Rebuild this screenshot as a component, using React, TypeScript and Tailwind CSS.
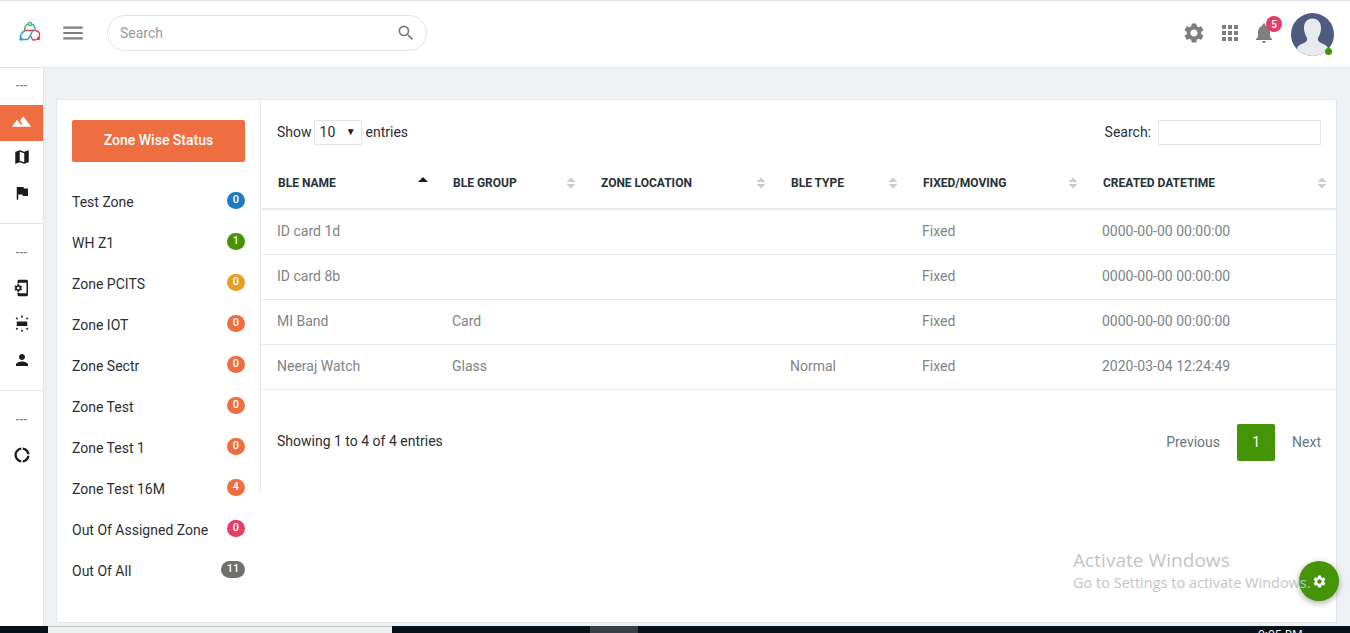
import {
  MdApps,
  MdDonutLarge,
  MdFlag,
  MdMap,
  MdMenu,
  MdNotifications,
  MdPerson,
  MdPhonelinkSetup,
  MdSearch,
  MdSettings,
  MdTerrain,
  MdWbIridescent,
} from 'react-icons/md';

const zones = [
  { name: 'Test Zone', count: 0, color: 'bg-[#1a7cc1]' },
  { name: 'WH Z1', count: 1, color: 'bg-[#459407]' },
  { name: 'Zone PCITS', count: 0, color: 'bg-[#e79f26]' },
  { name: 'Zone IOT', count: 0, color: 'bg-[#ef6e41]' },
  { name: 'Zone Sectr', count: 0, color: 'bg-[#ef6e41]' },
  { name: 'Zone Test', count: 0, color: 'bg-[#ef6e41]' },
  { name: 'Zone Test 1', count: 0, color: 'bg-[#ef6e41]' },
  { name: 'Zone Test 16M', count: 4, color: 'bg-[#ef6e41]' },
  { name: 'Out Of Assigned Zone', count: 0, color: 'bg-[#e23e67]' },
  { name: 'Out Of All', count: 11, color: 'bg-[#6f6f6f]' },
];

const columns = [
  { label: 'BLE NAME', width: 'w-[175px]', sorted: true },
  { label: 'BLE GROUP', width: 'w-[148px]' },
  { label: 'ZONE LOCATION', width: 'w-[190px]' },
  { label: 'BLE TYPE', width: 'w-[132px]' },
  { label: 'FIXED/MOVING', width: 'w-[180px]' },
  { label: 'CREATED DATETIME', width: 'w-[249px]' },
];

const rows = [
  ['ID card 1d', '', '', '', 'Fixed', '0000-00-00 00:00:00'],
  ['ID card 8b', '', '', '', 'Fixed', '0000-00-00 00:00:00'],
  ['MI Band', 'Card', '', '', 'Fixed', '0000-00-00 00:00:00'],
  ['Neeraj Watch', 'Glass', '', 'Normal', 'Fixed', '2020-03-04 12:24:49'],
];

function Logo() {
  return (
    <svg width="24" height="24" viewBox="0 0 24 24" fill="none" strokeWidth="1.4" strokeLinecap="round">
      <path d="M6.500 9.500C6.500 6 8 3.500 10.500 3" stroke="#47b36a" />
      <path d="M13.500 3C15.500 3.500 16.800 5.500 17 8" stroke="#47b36a" />
      <circle cx="12" cy="3" r="1.600" stroke="#47b36a" />
      <path d="M7 9.500H18C21.500 10 22.500 13.500 21 16.500" stroke="#e2404f" />
      <path d="M12.500 15L14.500 18.500C16.500 19.500 18 19 19.500 18" stroke="#e2404f" />
      <circle cx="20.500" cy="17.500" r="1.700" fill="#e2404f" stroke="none" />
      <path d="M6.500 10C3.500 11.500 2 14.500 2.500 16.500" stroke="#2a9ddb" />
      <path d="M4.500 18.500H9C11 18.500 12 15 15 9" stroke="#2a9ddb" />
      <circle cx="3" cy="18" r="1.700" fill="#2a9ddb" stroke="none" />
    </svg>
  );
}

function Avatar() {
  return (
    <svg width="43" height="43" viewBox="0 0 43 43">
      <defs>
        <clipPath id="avatar-clip">
          <circle cx="21.500" cy="21.500" r="21.500" />
        </clipPath>
      </defs>
      <g clipPath="url(#avatar-clip)">
        <rect width="43" height="43" fill="#4f5b7f" />
        <path
          d="M21.500 5.500c-5.500 0-8.500 4-8.500 9.500 0 4 1.500 7.500 3 10 .6 2-.5 4-3 5-3 1.200-7 2.500-7 6.500V43h31v-6.500c0-4-4-5.300-7-6.500-2.500-1-3.600-3-3-5 1.500-2.500 3-6 3-10 0-5.500-3-9.500-8.500-9.500z"
          fill="#e6eaec"
        />
      </g>
    </svg>
  );
}

function SortArrows({ sorted }: { sorted?: boolean }) {
  if (sorted) {
    return (
      <svg width="10" height="12" viewBox="0 0 10 12" className="text-[#1b1b1b] -mt-[3px]">
        <path d="M0 6 5 1l5 5z" fill="currentColor" />
      </svg>
    );
  }
  return (
    <svg width="10" height="12" viewBox="0 0 10 12" className="text-[#c9cdd0]">
      <path d="M0.500 5 5 0.500 9.500 5zM0.500 7h9L5 11.500z" fill="currentColor" />
    </svg>
  );
}

function SideGroup({ className, children }: { className: string; children: React.ReactNode }) {
  return (
    <div className={className}>
      <div className="h-[12px] mt-[1px] -mb-[1px] flex items-center justify-center text-[#777] text-[10px] font-bold leading-none">---</div>
      {children}
    </div>
  );
}

function SideItem({ icon, active }: { icon: React.ReactNode; active?: boolean }) {
  return (
    <div className={`h-[36px] flex items-center justify-center text-[18px] ${active ? 'bg-[#ef6e41] text-white' : 'text-[#1c1c1c]'}`}>
      {icon}
    </div>
  );
}

export default function App() {
  return (
    <div className="relative w-[1350px] h-[633px] overflow-hidden flex flex-col bg-white text-[14px] font-['Roboto',sans-serif]">
      <header className="h-[68px] shrink-0 flex items-center pb-[2px] bg-white border-t border-t-[#dfe2e4] border-b border-b-[#e3e6e8]">
        <div className="w-[60px] flex justify-center">
          <Logo />
        </div>
        <MdMenu className="text-[#7f7f7f] text-[26px]" />
        <div className="ml-[21px] w-[320px] h-[36px] border border-[#e2e4e6] rounded-full flex items-center justify-between pl-[12px] pr-[10px]">
          <span className="text-[#9a9a9a]">Search</span>
          <MdSearch className="text-[#7b7b7b] text-[20px]" />
        </div>
        <div className="ml-auto flex items-center pr-[16px]">
          <MdSettings className="text-[#7f7f7f] text-[24px]" />
          <MdApps className="text-[#7f7f7f] text-[24px] ml-[12px]" />
          <div className="relative ml-[10px] mr-[15px]">
            <MdNotifications className="text-[#7f7f7f] text-[24px]" />
            <span className="absolute -top-[5px] -right-[6px] w-[16px] h-[16px] rounded-full bg-[#e23e67] text-white text-[10px] font-medium flex items-center justify-center">5</span>
          </div>
          <div className="relative mt-[2px]">
            <Avatar />
            <span className="absolute right-[2px] bottom-[1px] w-[7px] h-[7px] rounded-full bg-[#459407]" />
          </div>
        </div>
      </header>

      <div className="flex-1 flex min-h-0">
        <aside className="w-[44px] shrink-0 bg-white border-r border-[#e3e6e8]">
          <SideGroup className="pt-[11px] pb-[10px] border-b border-[#e3e6e8]">
            <div className="pt-[14px]">
              <SideItem active icon={<MdTerrain className="text-[21px] -mt-[3px]" />} />
              <SideItem icon={<MdMap className="-mt-[4px]" />} />
              <SideItem icon={<MdFlag className="-mt-[4px]" />} />
            </div>
          </SideGroup>
          <SideGroup className="pt-[22px] pb-[12px] border-b border-[#e3e6e8]">
            <div className="pt-[12px]">
              <SideItem icon={<MdPhonelinkSetup />} />
              <SideItem icon={<MdWbIridescent />} />
              <SideItem icon={<MdPerson />} />
            </div>
          </SideGroup>
          <SideGroup className="pt-[22px]">
            <div className="pt-[12px]">
              <SideItem icon={<MdDonutLarge />} />
            </div>
          </SideGroup>
        </aside>

        <main className="flex-1 min-w-0 bg-[#eff2f4] pt-[31px] pl-[12px] pr-[13px] pb-[3px]">
          <div className="h-full bg-white border border-[#e3e6e8] flex">
            <div className="w-[204px] shrink-0 relative pt-[20px] pl-[15px] pr-[16px]">
              <div className="absolute right-0 top-0 h-[392px] border-r border-[#e3e6e8]" />
              <button className="w-[173px] h-[42px] pb-[2px] rounded-[2px] bg-[#ef6e41] text-white text-[14px] font-medium">Zone Wise Status</button>
              <ul className="mt-[20px]">
                {zones.map((zone) => (
                  <li key={zone.name} className="h-[41px] flex items-center justify-between text-[#2b2f33]">
                    <span>{zone.name}</span>
                    <span className={`${zone.color} -mt-[5px] h-[17px] ${zone.count > 9 ? 'w-[24px]' : 'w-[18px]'} rounded-full text-white text-[11px] font-medium flex items-center justify-center`}>
                      {zone.count}
                    </span>
                  </li>
                ))}
              </ul>
            </div>

            <div className="flex-1 min-w-0 pl-[1px]">
              <div className="flex items-center justify-between h-[24px] mt-[20px] pl-[15px] pr-[15px] text-[#2b2f33]">
                <div className="flex items-center">
                  Show
                  <div className="relative ml-[2px] mr-[4px] w-[48px] h-[25px] border border-[#e3e6e8] flex items-center pl-[5px]">
                    10
                    <span className="absolute right-[5px] top-[6px] text-[10px] leading-[10px] text-[#222]">▼</span>
                  </div>
                  entries
                </div>
                <div className="flex items-center">
                  Search:
                  <div className="ml-[7px] w-[163px] h-[25px] border border-[#e3e6e8]" />
                </div>
              </div>

              <table className="mt-[16px] w-[1074px] table-fixed border-collapse">
                <thead>
                  <tr className="h-[49px] border-b-2 border-[#e6e8ea]">
                    {columns.map((col) => (
                      <th key={col.label} className={`${col.width} pl-[16px] pr-[9px] pb-[2px] text-left text-[12px] font-bold text-[#263238]`}>
                        <div className="flex items-center justify-between">
                          {col.label}
                          <SortArrows sorted={col.sorted} />
                        </div>
                      </th>
                    ))}
                  </tr>
                </thead>
                <tbody>
                  {rows.map((row) => (
                    <tr key={row[0]} className="h-[45px] border-b border-[#e6e8ea]">
                      {row.map((cell, i) => (
                        <td key={i} className="pl-[15px] text-[#7d8487]">{cell}</td>
                      ))}
                    </tr>
                  ))}
                </tbody>
              </table>

              <div className="flex items-center justify-between mt-[34px] pl-[15px] pr-[15px]">
                <span className="text-[#2b2f33] -mt-[2px]">Showing 1 to 4 of 4 entries</span>
                <div className="flex items-center text-[#67757c]">
                  <span>Previous</span>
                  <span className="ml-[17px] w-[38px] h-[37px] rounded-[2px] bg-[#459407] text-white flex items-center justify-center">1</span>
                  <span className="ml-[17px]">Next</span>
                </div>
              </div>
            </div>
          </div>
        </main>
      </div>

      <footer className="h-[7px] shrink-0 flex overflow-hidden bg-[#07111a]">
        <div className="w-[48px]" />
        <div className="w-[344px] bg-[#eff1f1] border-t border-[#c9cccc]" />
        <div className="w-[198px]" />
        <div className="w-[48px] bg-[#3a3f47]" />
        <span className="ml-[620px] mt-[2px] text-white text-[12px] leading-[14px] font-['Open_Sans',sans-serif]">9:05 PM</span>
      </footer>

      <button className="absolute left-[1299px] top-[561px] w-[40px] h-[40px] rounded-full bg-[#459407] text-white flex items-center justify-center shadow-[0_2px_6px_rgba(0,0,0,0.35)]">
        <MdSettings className="text-[15px]" />
      </button>

      <div className="absolute left-[1073px] top-[548px] text-[#c4c4c4] font-['Open_Sans',sans-serif] pointer-events-none whitespace-nowrap">
        <div className="text-[19px] leading-[24px] tracking-[0.05px]">Activate Windows</div>
        <div className="text-[14.500px] leading-[22px]">Go to Settings to activate Windows.</div>
      </div>
    </div>
  );
}
